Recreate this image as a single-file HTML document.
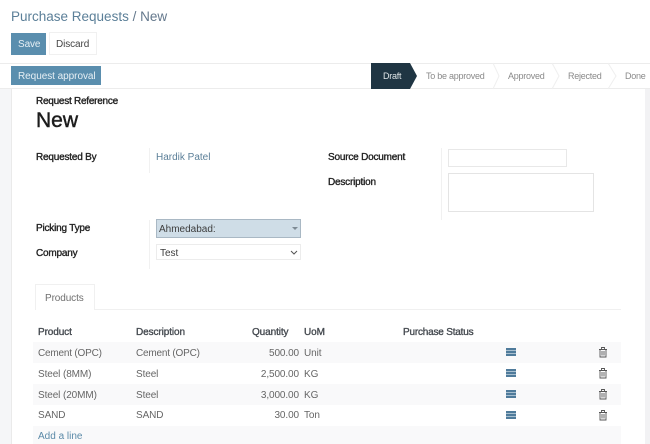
<!DOCTYPE html>
<html><head><meta charset="utf-8">
<style>
html,body{margin:0;padding:0;background:#fff}
body{width:650px;height:444px;position:relative;overflow:hidden;font-family:"Liberation Sans",sans-serif;font-size:10px;color:#4c4c4c;filter:blur(.3px)}
.a{position:absolute;white-space:nowrap;line-height:12px}
.b{box-sizing:border-box;position:absolute}
.lbl{color:#222;-webkit-text-stroke:.35px #222;letter-spacing:-.2px}
.th{color:#464b51;-webkit-text-stroke:.35px #464b51;letter-spacing:-.1px}
.c{color:#666;letter-spacing:-.1px}
.s{font-size:9px;letter-spacing:-.25px;color:#8a8a8a;top:70px}
.row{position:absolute;left:33px;width:588px;height:21px;background:#f9f9fa}
svg{position:absolute;display:block}
</style></head><body>
<div class="a" style="left:11px;top:8px;font-size:13.5px;line-height:17px;color:#64788c"><span style="color:#5b7f98">Purchase Requests</span> / New</div>
<div class="b" style="left:11px;top:33px;width:35px;height:22px;background:#5a8eae"></div>
<div class="a" style="left:18px;top:39px;color:#e6eff4;letter-spacing:-.1px">Save</div>
<div class="b" style="left:49px;top:32px;width:48px;height:23px;border:1px solid #f0f0f0"></div>
<div class="a" style="left:56px;top:39px;color:#444;letter-spacing:-.1px">Discard</div>
<div class="b" style="left:0;top:63px;width:650px;height:1px;background:#ececec"></div>
<div class="b" style="left:0;top:88px;width:650px;height:1px;background:#ececec"></div>
<div class="b" style="left:11px;top:66px;width:90px;height:19px;background:#5a8eae"></div>
<div class="a" style="left:18px;top:71px;color:#e6eff4;letter-spacing:-.05px">Request approval</div>
<svg style="left:360px;top:62px" width="290" height="28" viewBox="0 0 290 28">
<polygon points="11,1 50,1 57,14 50,27 11,27" fill="#1f3543"/>
<polyline points="133,1 139,14 133,27" fill="none" stroke="#efefef"/>
<polyline points="192,1 199,14 192,27" fill="none" stroke="#efefef"/>
<polyline points="248,1 256,14 248,27" fill="none" stroke="#efefef"/>
</svg>
<div class="a s" style="left:383px;color:#dfe5e8">Draft</div>
<div class="a s" style="left:426px">To be approved</div>
<div class="a s" style="left:508px">Approved</div>
<div class="a s" style="left:568px">Rejected</div>
<div class="a s" style="left:625px">Done</div>
<div class="b" style="left:0;top:89px;width:11px;height:355px;background:#f5f6f8"></div>
<div class="b" style="left:11px;top:89px;width:1px;height:355px;background:#eaeaea"></div>
<div class="b" style="left:645px;top:89px;width:5px;height:355px;background:#f2f2f4"></div>
<div class="a lbl" style="left:36px;top:96px;letter-spacing:-.25px">Request Reference</div>
<div class="a" style="left:36px;top:108px;font-size:21px;line-height:26px;color:#1c1c1c;-webkit-text-stroke:.45px #1c1c1c">New</div>
<div class="a lbl" style="left:36px;top:152px">Requested By</div>
<div class="b" style="left:149px;top:148px;width:1px;height:25px;background:#f1f1f1"></div>
<div class="a" style="left:156px;top:152px;color:#5b7f98">Hardik Patel</div>
<div class="a lbl" style="left:328px;top:152px">Source Document</div>
<div class="a lbl" style="left:328px;top:177px">Description</div>
<div class="b" style="left:441px;top:148px;width:1px;height:72px;background:#f1f1f1"></div>
<div class="b" style="left:448px;top:149px;width:119px;height:18px;border:1px solid #e8e8e8"></div>
<div class="b" style="left:448px;top:173px;width:146px;height:39px;border:1px solid #e4e4e4"></div>
<div class="a lbl" style="left:36px;top:223px">Picking Type</div>
<div class="a lbl" style="left:36px;top:248px">Company</div>
<div class="b" style="left:149px;top:220px;width:1px;height:49px;background:#f1f1f1"></div>
<div class="b" style="left:156px;top:219px;width:145px;height:19px;background:#cfdde7;border:1px solid #a9b8c4"></div>
<div class="a" style="left:159px;top:224px;color:#3d3d3d">Ahmedabad:</div>
<svg style="left:292px;top:227px" width="6" height="4"><polygon points="0,0 6,0 3,3" fill="#7d8a94"/></svg>
<div class="b" style="left:156px;top:244px;width:145px;height:16px;border:1px solid #ececec"></div>
<div class="a" style="left:160px;top:248px;color:#3d3d3d">Test</div>
<svg style="left:290px;top:250px" width="8" height="5"><polyline points="1,1 4,4 7,1" fill="none" stroke="#555" stroke-width="1"/></svg>
<div class="b" style="left:35px;top:284px;width:60px;height:26px;border:1px solid #f0f0f0;border-bottom:0;background:#fff"></div>
<div class="a" style="left:45px;top:293px;color:#707070;letter-spacing:-.1px">Products</div>
<div class="b" style="left:95px;top:309px;width:526px;height:1px;background:#f0f0f0"></div>
<div class="a th" style="left:38px;top:327px">Product</div>
<div class="a th" style="left:136px;top:327px">Description</div>
<div class="a th" style="left:252px;top:327px">Quantity</div>
<div class="a th" style="left:304px;top:327px">UoM</div>
<div class="a th" style="left:403px;top:327px;letter-spacing:-.2px">Purchase Status</div>
<div class="row" style="top:342px"></div>
<div class="row" style="top:384px"></div>
<div class="row" style="top:426px;height:18px"></div>
<div class="a c" style="left:38px;top:348px;letter-spacing:-.2px">Cement (OPC)</div>
<div class="a c" style="left:136px;top:348px;letter-spacing:-.2px">Cement (OPC)</div>
<div class="a c" style="right:351px;top:348px">500.00</div>
<div class="a c" style="left:304px;top:348px">Unit</div>
<div class="a c" style="left:38px;top:369px">Steel (8MM)</div>
<div class="a c" style="left:136px;top:369px">Steel</div>
<div class="a c" style="right:351px;top:369px">2,500.00</div>
<div class="a c" style="left:304px;top:369px">KG</div>
<div class="a c" style="left:38px;top:390px">Steel (20MM)</div>
<div class="a c" style="left:136px;top:390px">Steel</div>
<div class="a c" style="right:351px;top:390px">3,000.00</div>
<div class="a c" style="left:304px;top:390px">KG</div>
<div class="a c" style="left:38px;top:410px">SAND</div>
<div class="a c" style="left:136px;top:410px">SAND</div>
<div class="a c" style="right:351px;top:410px">30.00</div>
<div class="a c" style="left:304px;top:410px">Ton</div>
<div class="a" style="left:38px;top:431px;color:#5b8aa8">Add a line</div>
<svg style="left:506px;top:347px" width="11" height="73" viewBox="0 0 11 73">
<g fill="#a9c0d0"><rect y="1" width="10" height="8"/><rect y="22" width="10" height="8"/><rect y="43" width="10" height="8"/><rect y="64" width="10" height="8"/></g>
<g fill="#4f7b9b">
<path d="M0 1h10v2H0zM0 4h10v2H0zM0 7h10v2H0z"/>
<path transform="translate(0 21)" d="M0 1h10v2H0zM0 4h10v2H0zM0 7h10v2H0z"/>
<path transform="translate(0 42)" d="M0 1h10v2H0zM0 4h10v2H0zM0 7h10v2H0z"/>
<path transform="translate(0 63)" d="M0 1h10v2H0zM0 4h10v2H0zM0 7h10v2H0z"/>
</g></svg>
<svg style="left:599px;top:347px" width="8" height="74" viewBox="0 0 8 74">
<g fill="none" stroke="#555" stroke-width=".9">
<path d="M0 2.500h8M2.500 2.500V.5h3v2M1 2.500V10h6V2.500M3 4v4.500M5 4v4.500"/>
<path transform="translate(0 21)" d="M0 2.500h8M2.500 2.500V.5h3v2M1 2.500V10h6V2.500M3 4v4.500M5 4v4.500"/>
<path transform="translate(0 42)" d="M0 2.500h8M2.500 2.500V.5h3v2M1 2.500V10h6V2.500M3 4v4.500M5 4v4.500"/>
<path transform="translate(0 63)" d="M0 2.500h8M2.500 2.500V.5h3v2M1 2.500V10h6V2.500M3 4v4.500M5 4v4.500"/>
</g></svg>
</body></html>
